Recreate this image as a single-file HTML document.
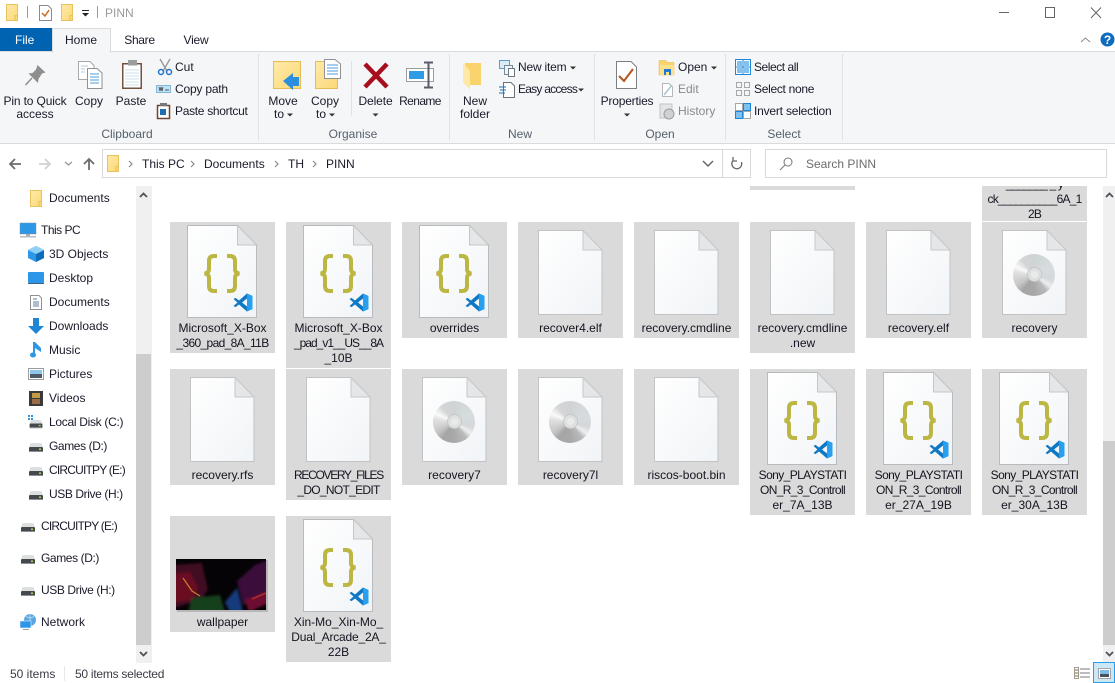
<!DOCTYPE html>
<html><head><meta charset="utf-8"><title>PINN</title>
<style>
html,body{margin:0;padding:0;background:#fff}
body{width:1115px;height:683px;overflow:hidden;position:relative;font-family:"Liberation Sans",sans-serif;font-size:12px;color:#1a1a2a}
.a{position:absolute}
.t{position:absolute;white-space:nowrap;line-height:16px;height:16px}
.c{transform:translateX(-50%)}
.g{color:#8a8a8a}
.n{color:#55606c}
#main{position:absolute;left:152px;top:186px;width:951px;height:476px;overflow:hidden}
.i{position:absolute;width:105px;background:#d9dad9}
.i svg{position:absolute;left:0;top:0}
.l{position:absolute;left:-3px;width:111px;top:99px;text-align:center;line-height:15px;white-space:nowrap;color:#141420}
.d{position:absolute;left:31px;top:31.500px;width:42px;height:42px;border-radius:50%;background:conic-gradient(#cfd3d4 0deg,#d6dcde 60deg,#d4d8da 105deg,#eeeeee 125deg,#b8b9ba 142deg,#a8a8a8 180deg,#a5a5a5 215deg,#c6c6c6 238deg,#e0e0e0 278deg,#fafafa 295deg,#d4d5d6 320deg,#cfd3d4 360deg)}
.d:after{content:"";position:absolute;left:13.500px;top:13.500px;width:13px;height:13px;border-radius:50%;background:#e9ebeb;border:1px solid #c4c6c7;box-shadow:inset 0 0 0 3px #dfe1e1}
</style></head><body>
<svg width="0" height="0" style="position:absolute">
<defs>
<linearGradient id="pg" x1="0" y1="0" x2="1" y2="1"><stop offset="0" stop-color="#ffffff"/><stop offset="1" stop-color="#f1f4f7"/></linearGradient>
<linearGradient id="fd" x1="0" y1="0" x2="1" y2="1"><stop offset="0" stop-color="#ffeaa8"/><stop offset="1" stop-color="#fcd877"/></linearGradient>
<filter id="bl"><feGaussianBlur stdDeviation="1.200"/></filter>
<symbol id="json" viewBox="0 0 105 100" width="105" height="100">
<path d="M17.500 3.500H67.500L86.500 23V95.500H17.500Z" fill="url(#pg)" stroke="#b8bbbd"/>
<path d="M67.500 3.500V23H86.500Z" fill="#e4e6e7" stroke="#c4c6c8"/>
<g transform="translate(1,0)"><path d="M46 34h-3q-5 0-5 5v8q0 4-4.500 4.500 4.500.5 4.500 4.500v8q0 5 5 5h3M56 34h3q5 0 5 5v8q0 4 4.500 4.500-4.500.5-4.500 4.500v8q0 5-5 5h-3" fill="none" stroke="#bcb742" stroke-width="4"/></g>
<g transform="translate(63.500,71.500)"><path fill-rule="evenodd" d="M13.500 0L5.500 7 2 4.400 0 5.500 4 9 0 12.500 2 13.600 5.500 11 13.500 18 19 15.500V2.500ZM13.500 5V13L8.500 9Z" fill="#0d78c6"/><path d="M13.500 0L19 2.500V15.500L13.500 18V5Z" fill="#28a0ef"/></g>
</symbol>
<symbol id="blank" viewBox="0 0 105 100" width="105" height="100">
<path d="M20.500 8.500H65L84 28V92.500H20.500Z" fill="url(#pg)" stroke="#c1c3c5"/>
<path d="M65 8.500V28H84Z" fill="#e4e6e7" stroke="#c6c8ca"/>
</symbol>
<symbol id="fold" viewBox="0 0 14 17" width="14" height="17">
<path d="M1.500 .5H12.500V16.500H1.500Z" fill="url(#fd)" stroke="#e7c25e"/><path d="M10 16V11.500H12.500" fill="#f8d675" stroke="#e7c25e"/>
</symbol>
<symbol id="hdd" viewBox="0 0 16 12" width="16" height="12">
<path d="M2 3.500Q2.500 2 4 2H12Q13.500 2 14 3.500L15 6H1Z" fill="#dcdfe0"/><rect x="1" y="6" width="14" height="5" rx="1" fill="#45484c"/><rect x="11" y="7.500" width="2" height="1.500" fill="#a7d653"/><rect x="1" y="10" width="14" height="1" fill="#8f9295"/>
</symbol>
</defs>
</svg>

<!-- ribbon backdrops -->
<div class="a" style="left:0;top:51px;width:1115px;height:91px;background:#f5f6f7;border-top:1px solid #dadbdc;border-bottom:1px solid #dadbdc"></div>
<div class="a" style="left:0;top:28px;width:52px;height:23px;background:#0063b1"></div>
<div class="t" style="left:15px;top:32px;color:#fff">File</div>
<div class="a" style="left:52px;top:28px;width:57px;height:24px;background:#f5f6f7;border:1px solid #dadbdc;border-bottom:0"></div>
<div class="t c" style="left:81px;top:32px">Home</div>
<div class="t c" style="left:139.500px;top:32px;letter-spacing:-.3px">Share</div>
<div class="t c" style="left:196px;top:32px;letter-spacing:-.2px">View</div>
<div class="t" style="left:105px;top:5px;color:#9a9a9a">PINN</div>

<!-- separators -->
<div class="a" style="left:258px;top:54px;width:1px;height:86px;background:#e1e2e3"></div>
<div class="a" style="left:449px;top:54px;width:1px;height:86px;background:#e1e2e3"></div>
<div class="a" style="left:594px;top:54px;width:1px;height:86px;background:#e1e2e3"></div>
<div class="a" style="left:725px;top:54px;width:1px;height:86px;background:#e1e2e3"></div>
<div class="a" style="left:842px;top:54px;width:1px;height:86px;background:#e1e2e3"></div>
<div class="a" style="left:351px;top:61px;width:1px;height:55px;background:#e1e2e3"></div>

<!-- ribbon text -->
<div class="t c" style="left:35px;top:93px;letter-spacing:-.15px">Pin to Quick</div>
<div class="t c" style="left:35px;top:106px">access</div>
<div class="t c" style="left:89px;top:93px">Copy</div>
<div class="t c" style="left:131px;top:93px">Paste</div>
<div class="t" style="left:175px;top:59px">Cut</div>
<div class="t" style="left:175px;top:81px;letter-spacing:-.2px">Copy path</div>
<div class="t" style="left:175px;top:103px;letter-spacing:-.3px">Paste shortcut</div>
<div class="t c n" style="left:127px;top:126px">Clipboard</div>
<div class="t c" style="left:283px;top:93px">Move</div>
<div class="t" style="left:274px;top:106px">to</div>
<div class="t c" style="left:325px;top:93px">Copy</div>
<div class="t" style="left:316px;top:106px">to</div>
<div class="t c" style="left:375.500px;top:93px;letter-spacing:-.1px">Delete</div>
<div class="t c" style="left:420px;top:93px;letter-spacing:-.6px">Rename</div>
<div class="t c n" style="left:353px;top:126px">Organise</div>
<div class="t c" style="left:475px;top:93px">New</div>
<div class="t c" style="left:475px;top:106px">folder</div>
<div class="t" style="left:518px;top:59px;letter-spacing:-.2px">New item</div>
<div class="t" style="left:518px;top:81px;letter-spacing:-.75px">Easy access</div>
<div class="t c n" style="left:520px;top:126px">New</div>
<div class="t c" style="left:627px;top:93px;letter-spacing:-.2px">Properties</div>
<div class="t" style="left:678px;top:59px">Open</div>
<div class="t g" style="left:678px;top:81px">Edit</div>
<div class="t g" style="left:678px;top:103px">History</div>
<div class="t c n" style="left:660px;top:126px">Open</div>
<div class="t" style="left:754px;top:59px;letter-spacing:-.45px">Select all</div>
<div class="t" style="left:754px;top:81px;letter-spacing:-.3px">Select none</div>
<div class="t" style="left:754px;top:103px;letter-spacing:-.2px">Invert selection</div>
<div class="t c n" style="left:784px;top:126px">Select</div>

<!-- address -->
<div class="a" style="left:102px;top:149px;width:649px;height:29px;border:1px solid #d9d9d9;box-sizing:border-box"></div>
<div class="a" style="left:722px;top:149px;width:1px;height:29px;background:#d9d9d9"></div>
<div class="a" style="left:765px;top:149px;width:342px;height:29px;border:1px solid #d9d9d9;box-sizing:border-box"></div>
<div class="t" style="left:142px;top:156px">This PC</div>
<div class="t" style="left:204px;top:156px">Documents</div>
<div class="t" style="left:288px;top:156px">TH</div>
<div class="t" style="left:326px;top:156px">PINN</div>
<div class="t" style="left:806px;top:156px;color:#6d6d6d">Search PINN</div>

<!-- nav -->
<div class="t" style="left:49px;top:190px">Documents</div>
<div class="t" style="left:41px;top:222px;letter-spacing:-.5px">This PC</div>
<div class="t" style="left:49px;top:246px">3D Objects</div>
<div class="t" style="left:49px;top:270px">Desktop</div>
<div class="t" style="left:49px;top:294px">Documents</div>
<div class="t" style="left:49px;top:318px">Downloads</div>
<div class="t" style="left:49px;top:342px">Music</div>
<div class="t" style="left:49px;top:366px">Pictures</div>
<div class="t" style="left:49px;top:390px">Videos</div>
<div class="t" style="left:49px;top:414px;letter-spacing:-.3px">Local Disk (C:)</div>
<div class="t" style="left:49px;top:438px;letter-spacing:-.4px">Games (D:)</div>
<div class="t" style="left:49px;top:462px;letter-spacing:-.8px">CIRCUITPY (E:)</div>
<div class="t" style="left:49px;top:486px;letter-spacing:-.4px">USB Drive (H:)</div>
<div class="t" style="left:41px;top:518px;letter-spacing:-.8px">CIRCUITPY (E:)</div>
<div class="t" style="left:41px;top:550px;letter-spacing:-.4px">Games (D:)</div>
<div class="t" style="left:41px;top:582px;letter-spacing:-.4px">USB Drive (H:)</div>
<div class="t" style="left:41px;top:614px">Network</div>

<!-- scrollbars -->
<div class="a" style="left:136px;top:186px;width:16px;height:477px;background:#f0f0f0"></div>
<div class="a" style="left:136px;top:354px;width:15px;height:291px;background:#cdcdcd"></div>
<div class="a" style="left:1103px;top:186px;width:12px;height:477px;background:#f0f0f0"></div>
<div class="a" style="left:1103px;top:441px;width:12px;height:204px;background:#cdcdcd"></div>

<!-- status -->
<div class="t" style="left:10px;top:666px;color:#3a3a44">50 items</div>
<div class="t" style="left:75px;top:666px;color:#3a3a44;letter-spacing:-.25px">50 items selected</div>
<div class="a" style="left:64px;top:666px;width:1px;height:15px;background:#e8e8e8"></div>
<div class="a" style="left:1093px;top:662px;width:22px;height:21px;background:#cce8f6;border:1px solid #26a0ee;box-sizing:border-box"></div>

<!-- main -->
<div id="main">
<div class="a" style="left:598px;top:-1px;width:105px;height:5px;background:#d9dad9"></div>
<div class="i" style="left:830px;top:-1px;height:36px;overflow:hidden"><div class="l" style="top:-8px;letter-spacing:-.8px">_______  _ y<br>ck__________6A_1<br>2B</div></div>

<div class="i" style="left:18px;top:36px;height:131px"><svg width="105" height="100"><use href="#json"/></svg><div class="l">Microsoft_X-Box<br><span style="letter-spacing:-.65px">_360_pad_8A_11B</span></div></div>
<div class="i" style="left:134px;top:36px;height:146px"><svg width="105" height="100"><use href="#json"/></svg><div class="l">Microsoft_X-Box<br><span style="letter-spacing:-1px">_pad_v1__US__8A</span><br>_10B</div></div>
<div class="i" style="left:250px;top:36px;height:116px"><svg width="105" height="100"><use href="#json"/></svg><div class="l">overrides</div></div>
<div class="i" style="left:366px;top:36px;height:116px"><svg width="105" height="100"><use href="#blank"/></svg><div class="l">recover4.elf</div></div>
<div class="i" style="left:482px;top:36px;height:116px"><svg width="105" height="100"><use href="#blank"/></svg><div class="l">recovery.cmdline</div></div>
<div class="i" style="left:598px;top:36px;height:131px"><svg width="105" height="100"><use href="#blank"/></svg><div class="l">recovery.cmdline<br>.new</div></div>
<div class="i" style="left:714px;top:36px;height:116px"><svg width="105" height="100"><use href="#blank"/></svg><div class="l">recovery.elf</div></div>
<div class="i" style="left:830px;top:36px;height:116px"><svg width="105" height="100"><use href="#blank"/></svg><div class="d"></div><div class="l">recovery</div></div>

<div class="i" style="left:18px;top:183px;height:116px"><svg width="105" height="100"><use href="#blank"/></svg><div class="l">recovery.rfs</div></div>
<div class="i" style="left:134px;top:183px;height:131px"><svg width="105" height="100"><use href="#blank"/></svg><div class="l"><span style="letter-spacing:-1.3px">RECOVERY_FILES</span><br><span style="letter-spacing:-.7px">_DO_NOT_EDIT</span></div></div>
<div class="i" style="left:250px;top:183px;height:116px"><svg width="105" height="100"><use href="#blank"/></svg><div class="d"></div><div class="l">recovery7</div></div>
<div class="i" style="left:366px;top:183px;height:116px"><svg width="105" height="100"><use href="#blank"/></svg><div class="d"></div><div class="l">recovery7l</div></div>
<div class="i" style="left:482px;top:183px;height:116px"><svg width="105" height="100"><use href="#blank"/></svg><div class="l">riscos-boot.bin</div></div>
<div class="i" style="left:598px;top:183px;height:146px"><svg width="105" height="100"><use href="#json"/></svg><div class="l"><span style="letter-spacing:-.6px">Sony_PLAYSTATI</span><br><span style="letter-spacing:-.65px">ON_R_3_Controll</span><br>er_7A_13B</div></div>
<div class="i" style="left:714px;top:183px;height:146px"><svg width="105" height="100"><use href="#json"/></svg><div class="l"><span style="letter-spacing:-.6px">Sony_PLAYSTATI</span><br><span style="letter-spacing:-.65px">ON_R_3_Controll</span><br>er_27A_19B</div></div>
<div class="i" style="left:830px;top:183px;height:146px"><svg width="105" height="100"><use href="#json"/></svg><div class="l"><span style="letter-spacing:-.6px">Sony_PLAYSTATI</span><br><span style="letter-spacing:-.65px">ON_R_3_Controll</span><br>er_30A_13B</div></div>

<div class="i" style="left:18px;top:330px;height:116px">
<svg width="105" height="100" viewBox="0 0 105 100">
<rect x="7" y="44" width="91" height="52" fill="#b6b7b6"/>
<clipPath id="wc"><rect x="6" y="43" width="90" height="51"/></clipPath>
<rect x="6" y="43" width="90" height="51" fill="#060306"/>
<g clip-path="url(#wc)"><g filter="url(#bl)">
<path d="M4 49L32 47 38 74 30 84 4 92Z" fill="#3f0a22"/>
<path d="M4 58L20 56 28 72 22 84 4 86Z" fill="#6a0d24"/>
<path d="M22 82L50 79 55 96 18 96Z" fill="#143f1e"/>
<path d="M55 86L67 72 73 96H60Z" fill="#123a7c"/>
<path d="M67 65L85 49 98 44V77L73 89Z" fill="#3a0c3a"/>
<path d="M75 84L98 75V87L79 96Z" fill="#6e1030"/>
</g>
<path d="M13 62L22 75 30 80" fill="none" stroke="#c27a2c" stroke-width="1.300"/>
<path d="M82 83L96 77" stroke="#b8322c" stroke-width="1.300"/>
</g>
</svg>
<div class="l">wallpaper</div></div>
<div class="i" style="left:134px;top:330px;height:146px"><svg width="105" height="100"><use href="#json"/></svg><div class="l">Xin-Mo_Xin-Mo_<br><span style="letter-spacing:-.2px">Dual_Arcade_2A_</span><br>22B</div></div>
</div>

<!-- chrome icons -->
<svg class="a" style="left:0;top:0" width="1115" height="683" viewBox="0 0 1115 683">
<!-- QAT -->
<use href="#fold" x="5" y="4" width="14" height="17"/>
<rect x="27" y="6" width="1" height="12" fill="#9a9a9a"/>
<path d="M39.500 5.500H48L51.500 9V20.500H39.500Z" fill="#fff" stroke="#8c8c8c"/><path d="M42 13L45 16 49 10" fill="none" stroke="#c26a24" stroke-width="1.500"/>
<use href="#fold" x="60" y="4" width="14" height="17"/>
<rect x="82" y="10" width="7" height="1" fill="#222"/><path d="M82 13H89L85.500 16.500Z" fill="#222"/>
<rect x="97" y="6" width="1" height="12" fill="#9a9a9a"/>
<!-- window controls -->
<rect x="999" y="12" width="10" height="1" fill="#666"/>
<rect x="1045.500" y="7.500" width="9" height="10" fill="none" stroke="#666"/>
<path d="M1091 7.500L1101 18M1101 7.500L1091 18" stroke="#666" fill="none"/>
<path d="M1081 42L1085.500 38 1090 42" fill="none" stroke="#8a8a8a"/>
<circle cx="1107.500" cy="39.500" r="7" fill="#0f6cbd"/><text x="1107.500" y="44" font-size="12" font-weight="bold" fill="#fff" text-anchor="middle" font-family="Liberation Sans">?</text>
<!-- pin -->
<path d="M37.500 65L45.500 72.500 42 73.500 38.500 79 38 83 28.500 73.500 32.500 73 36 69.500Z" fill="#8e8e8e"/>
<path d="M32 78L25.500 85" stroke="#8e8e8e" stroke-width="1.500"/>
<!-- copy -->
<path d="M78.500 61.500H90L94 65.500V79.500H78.500Z" fill="#fff" stroke="#a5a7a9"/>
<path d="M87.500 68.500H97L102 73V88.500H87.500Z" fill="#fff" stroke="#8f9193"/>
<path d="M90 74H99M90 77H99M90 80H99M90 83H99" stroke="#4f9bdc"/>
<path d="M81 66H88M81 69H85M81 72H85" stroke="#b4c8dc"/>
<!-- paste -->
<rect x="122.750" y="63.750" width="18.500" height="24.500" fill="#fff" stroke="#745240" stroke-width="1.500"/>
<path d="M125 70H139M125 73H139M125 76H139M125 79H139M125 82H139M125 85H139" stroke="#cfe0ef"/>
<rect x="128" y="60" width="9" height="5.500" fill="#9a9c9e"/>
<!-- scissors -->
<path d="M160 59L167 71M170 59L163 71" stroke="#9a9da0" stroke-width="1.500" fill="none"/>
<circle cx="161" cy="72" r="2.500" fill="none" stroke="#1f75c4" stroke-width="1.500"/><circle cx="169" cy="72" r="2.500" fill="none" stroke="#1f75c4" stroke-width="1.500"/>
<!-- copy path -->
<rect x="156.500" y="85.500" width="14" height="7" fill="#bfe3f6" stroke="#85b7d4"/><path d="M159 87L160 91 161 87 162 91 163 87M165 90H169" stroke="#333" stroke-width=".7" fill="none"/>
<!-- paste shortcut -->
<rect x="157.500" y="105.500" width="12" height="13" fill="#fff" stroke="#6e4632" stroke-width="1.500"/><rect x="160" y="103" width="7" height="3" fill="#777"/><rect x="160" y="109" width="6" height="6" fill="#1f6fb5"/>
<!-- move to -->
<rect x="273.500" y="61.500" width="27" height="27" fill="url(#fd)" stroke="#e6bd52"/>
<path d="M283 81L293 73V77H299V86H293V90Z" fill="#2a8fdf"/>
<!-- copy to -->
<rect x="315.500" y="61.500" width="22" height="27" fill="url(#fd)" stroke="#e6bd52"/>
<path d="M324.500 59.500H335L340.500 64V78.500H324.500Z" fill="#fff" stroke="#8f9193"/>
<path d="M327 65H338M327 68H338M327 71H338M327 74H338" stroke="#4f9bdc"/>
<!-- delete -->
<path d="M365 64L387 87M387 64L365 87" stroke="#a80f1e" stroke-width="4.500" fill="none"/>
<!-- rename -->
<rect x="406.500" y="68.500" width="27" height="13" fill="#fff" stroke="#9a9da0"/>
<rect x="409" y="71" width="15" height="8" fill="#2e9be6"/>
<path d="M424 62.500H433M424 87.500H433M428.500 63V87" stroke="#5a5c68" stroke-width="2" fill="none"/>
<!-- new folder -->
<rect x="465" y="63" width="16" height="22" fill="#fad36c"/><path d="M463 63L470 71V90L463 82Z" fill="#ffe9a8"/>
<!-- new item -->
<rect x="499.500" y="60.500" width="10" height="8" fill="#d9ecf8" stroke="#5f9bc7"/><rect x="504.500" y="65.500" width="8" height="9" fill="#eef5fa" stroke="#7a8a95"/><rect x="508.500" y="68.500" width="6" height="8" fill="#fff" stroke="#6d7880"/>
<path d="M503.500 82.500H511L514.500 86V97.500H503.500Z" fill="#fff" stroke="#6d7175"/><path d="M499 87H506M500 90H506M499 93H505" stroke="#1f6fb5"/>
<!-- properties -->
<path d="M616.500 61.500H631L636.500 67V88.500H616.500Z" fill="#fff" stroke="#7d7f82"/><path d="M619 76L624 81 633 69" fill="none" stroke="#b4551c" stroke-width="2"/>
<!-- open -->
<path d="M659 60.500H666L668 62.500H674V75H659Z" fill="#fbd46c" stroke="#e4b350" stroke-width=".5"/><rect x="660" y="65" width="14" height="10" fill="#fde08a"/><path d="M664 69H671V75H669V72H666V75H664Z" fill="#1f78d1"/>
<path d="M662.500 83.500H669L672.500 87V96.500H662.500Z" fill="#fff" stroke="#b5b7b9"/><path d="M664 95L672 85" stroke="#a8c5d6" stroke-width="1.500"/>
<rect x="660" y="104" width="12" height="14" fill="#e3e5e7" stroke="#c2c4c6"/><circle cx="669" cy="114" r="5" fill="#cfd2d4" stroke="#9a9c9e"/>
<!-- select -->
<rect x="735.500" y="59.500" width="15" height="15" fill="#fff" stroke="#1f86d6"/><path d="M743 60V74M736 67H750" stroke="#1f86d6"/><rect x="737" y="61" width="5" height="5" fill="#7fc1ef"/><rect x="744" y="61" width="5" height="5" fill="#7fc1ef"/><rect x="737" y="68" width="5" height="5" fill="#7fc1ef"/><rect x="744" y="68" width="5" height="5" fill="#7fc1ef"/>
<g fill="none" stroke="#a5a7a9"><rect x="736.500" y="82.500" width="5" height="5"/><rect x="744.500" y="82.500" width="5" height="5"/><rect x="736.500" y="90.500" width="5" height="5"/><rect x="744.500" y="90.500" width="5" height="5"/></g>
<g stroke="#1f86d6" fill="#fff"><rect x="735.500" y="103.500" width="7" height="7" stroke="#a5a7a9"/><rect x="743.500" y="103.500" width="7" height="7" fill="#7fc1ef"/><rect x="735.500" y="111.500" width="7" height="7" fill="#7fc1ef"/><rect x="743.500" y="111.500" width="7" height="7" stroke="#a5a7a9"/></g>
<!-- carets -->
<g fill="#333"><path d="M287 113.500H293L290 116.500Z"/><path d="M329 113.500H335L332 116.500Z"/><path d="M372.500 113.500H378.500L375.500 116.500Z"/><path d="M570 66.500H576L573 69.500Z"/><path d="M578 88.500H584L581 91.500Z"/><path d="M624 113.500H630L627 116.500Z"/><path d="M711 66.500H717L714 69.500Z"/></g>
<!-- nav arrows -->
<path d="M21 164H10M15 159L10 164 15 169" fill="none" stroke="#6d6d6d" stroke-width="1.800"/>
<path d="M50 164H39M45 159L50 164 45 169" fill="none" stroke="#d2d2d2" stroke-width="1.800"/>
<path d="M65 162L68.500 165 72 162" fill="none" stroke="#9a9a9a" stroke-width="1.300"/>
<path d="M89 170V159M84 164L89 159 94 164" fill="none" stroke="#6d6d6d" stroke-width="1.800"/>
<use href="#fold" x="106" y="155" width="14" height="17"/>
<g fill="none" stroke="#8a8a8a" stroke-width="1.200"><path d="M129 161L132 164 129 167"/><path d="M191 161L194 164 191 167"/><path d="M275 161L278 164 275 167"/><path d="M313 161L316 164 313 167"/></g>
<path d="M703 161L708 166 713 161" fill="none" stroke="#666" stroke-width="1.500"/>
<path d="M741.500 162A5 5 0 1 1 733 160.500M733 157V161H737" fill="none" stroke="#666" stroke-width="1.300"/>
<circle cx="788" cy="162" r="4" fill="none" stroke="#777"/><path d="M785 165L780 170" stroke="#777"/>
<!-- nav icons -->
<use href="#fold" x="29" y="190" width="14" height="17"/>
<rect x="20" y="223" width="16" height="11" fill="#2c97e6" stroke="#7f95a6" stroke-width=".5"/><rect x="20" y="236" width="16" height="1.500" fill="#b7bcc0"/><rect x="26" y="234" width="4" height="2" fill="#a5abb0"/>
<path d="M28 250L36 246 44 250V258L36 262 28 258Z" fill="#2c97e6"/><path d="M36 254V262L44 258V250Z" fill="#0f6cbd"/><path d="M28 250L36 254 44 250 36 246Z" fill="#8fd0f5"/>
<rect x="28" y="272" width="16" height="11" rx="1" fill="#2c97e6"/><rect x="28" y="283" width="16" height="1" fill="#3a5f82"/>
<path d="M30.500 295.500H39L41.500 298V309.500H30.500Z" fill="#fff" stroke="#8d9094"/><path d="M33 299H37M33 302H39M33 304H39M33 306H39" stroke="#5a7ea0"/>
<path d="M33 318H39V326H44L36 334 28 326H33Z" fill="#1f86d6"/>
<path d="M34 342V355" stroke="#2c97e6" stroke-width="2"/><path d="M35 342L41 348V352L35 348Z" fill="#2c97e6"/><ellipse cx="33" cy="355" rx="3" ry="2.500" fill="#2c97e6"/>
<rect x="28.500" y="368.500" width="15" height="11" fill="#fff" stroke="#9a9c9e"/><rect x="30" y="370" width="12" height="4" fill="#8fc7ea"/><rect x="30" y="374" width="12" height="4" fill="#4f5a66"/>
<rect x="29" y="391" width="14" height="15" fill="#3a3a3a"/><rect x="32" y="393" width="8" height="5" fill="#c59a46"/><rect x="32" y="399" width="8" height="5" fill="#9c6b4a"/>
<use href="#hdd" x="28" y="418" width="16" height="11"/><g fill="#2c97e6"><rect x="28" y="415" width="2" height="2"/><rect x="31" y="415" width="2" height="2"/><rect x="28" y="418" width="2" height="2"/><rect x="31" y="418" width="2" height="2"/></g>
<use href="#hdd" x="28" y="441" width="16" height="12"/>
<use href="#hdd" x="28" y="465" width="16" height="12"/>
<use href="#hdd" x="28" y="489" width="16" height="12"/>
<use href="#hdd" x="20" y="521" width="16" height="12"/>
<use href="#hdd" x="20" y="553" width="16" height="12"/>
<use href="#hdd" x="20" y="585" width="16" height="12"/>
<circle cx="30" cy="620" r="6" fill="#5aa6e0"/><path d="M26 616Q30 620 34 616M30 614V626" stroke="#cfe6f7" fill="none" stroke-width=".7"/>
<rect x="20" y="621" width="11" height="7" fill="#2c97e6" stroke="#fff" stroke-width=".5"/><rect x="23" y="629" width="6" height="1" fill="#9aa2a8"/>
<!-- scroll arrows -->
<path d="M140 197L143.500 193.500 147 197" fill="none" stroke="#50505a" stroke-width="1.800"/>
<path d="M140 652L143.500 655.500 147 652" fill="none" stroke="#50505a" stroke-width="1.800"/>
<path d="M1106 197L1109.500 193.500 1113 197" fill="none" stroke="#50505a" stroke-width="1.800"/>
<path d="M1106 652L1109.500 655.500 1113 652" fill="none" stroke="#50505a" stroke-width="1.800"/>
<!-- view buttons -->
<rect x="1074.500" y="667.500" width="4" height="11" fill="#fff" stroke="#a09c90"/><path d="M1075 670H1078M1075 673H1078M1075 676H1078" stroke="#8a6a40"/><path d="M1080 669H1090M1080 673H1090M1080 677H1090" stroke="#7a7a80"/>
<rect x="1098.500" y="668.500" width="12" height="10" fill="#fff" stroke="#a5a5a5"/><rect x="1100" y="670" width="9" height="4" fill="#7fbde8"/><rect x="1100" y="674" width="9" height="3" fill="#47525e"/>
</svg>
</body></html>
